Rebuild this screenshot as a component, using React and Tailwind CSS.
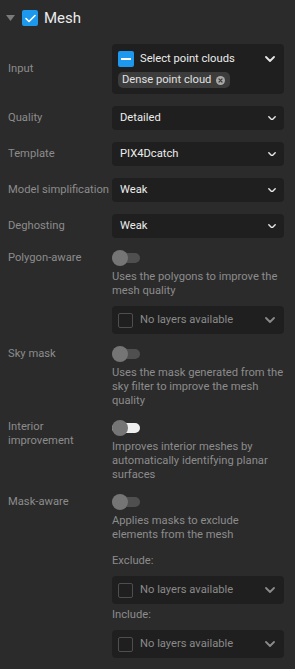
import React from 'react';

const font = { fontFamily: 'Roboto, "Noto Sans", sans-serif' };

function Chevron({ className = 'text-[#e6e6e6]', w = 8 }) {
  return (
    <svg width={w} height={w * 0.6} viewBox="0 0 10 6" className={className} fill="none">
      <path d="M1 1l4 4 4-4" stroke="currentColor" strokeWidth="1.8" strokeLinecap="round" strokeLinejoin="round" />
    </svg>
  );
}

function Select({ value }) {
  return (
    <div className="flex h-6 w-[172px] items-center justify-between rounded bg-[#1f1f1f] pl-2 pr-2">
      <span className="text-[11.2px] text-[#ececec]">{value}</span>
      <Chevron />
    </div>
  );
}

function LayerSelect() {
  return (
    <div className="flex h-7 w-[172px] items-center rounded bg-[#1f1f1f] pl-[6px] pr-[9px]">
      <span className="h-[15px] w-[15px] rounded-[2px] border-[1.5px] border-[#4e4e4e]" />
      <span className="ml-[7px] flex-1 text-[11.2px] text-[#8a8a8a]">No layers available</span>
      <Chevron className="text-[#8a8a8a]" w={10} />
    </div>
  );
}

function Toggle({ on }) {
  return (
    <div className="relative h-4 w-[28px]">
      <div className={`absolute left-0 right-0 top-[3px] h-[10px] rounded-full ${on ? 'bg-[#eeeeee]' : 'bg-[#4f4f4f]'}`} />
      <div className="absolute left-0 top-0 h-4 w-4 rounded-full bg-[#757575]" />
    </div>
  );
}

function Label({ children }) {
  return <div className="w-[104px] shrink-0 text-[11.2px] leading-[14px] text-[#8c8c8c]">{children}</div>;
}

function Desc({ children }) {
  return <p className="mt-1 text-[11.2px] leading-[14px] text-[#8c8c8c]">{children}</p>;
}

export default function App() {
  return (
    <div style={font} className="h-[669px] w-[295px] overflow-hidden bg-[#2b2b2b] pl-2 pr-[11px] pt-[10px]">
      {/* header */}
      <div className="flex h-4 items-center">
        <svg width="9" height="6" viewBox="0 0 9 6" className="ml-[-2px]">
          <path d="M0 0h9L4.5 6z" fill="#7a7a7a" />
        </svg>
        <div className="ml-[7px] flex h-4 w-4 items-center justify-center rounded-[2px] bg-[#1c98ee]">
          <svg width="11" height="9" viewBox="0 0 11 9" fill="none">
            <path d="M1 4.5l3 3L10 1.5" stroke="#fff" strokeWidth="1.6" strokeLinecap="round" strokeLinejoin="round" />
          </svg>
        </div>
        <span className="ml-[6px] text-[15px] text-[#ececec]">Mesh</span>
      </div>

      <div className="mt-[18px] flex flex-col gap-3">
        {/* Input */}
        <div className="flex items-center">
          <Label>Input</Label>
          <div className="w-[172px] rounded bg-[#1f1f1f] px-[6px] pb-[6px] pt-[7px]">
            <div className="flex h-4 items-center">
              <div className="flex h-4 w-4 items-center justify-center rounded-[2px] bg-[#1c98ee]">
                <div className="h-[2px] w-[10px] bg-white" />
              </div>
              <span className="ml-[6px] flex-1 text-[11.2px] text-[#ececec]">Select point clouds</span>
              <span className="mr-[3px]"><Chevron w={10} /></span>
            </div>
            <div className="mt-[5px] flex">
              <div className="flex h-4 items-center gap-[5px] rounded-[5px] bg-[#3c3c3c] pl-1 pr-[5px]">
                <span className="text-[11.2px] text-[#e0e0e0]">Dense point cloud</span>
                <span className="flex h-[9px] w-[9px] items-center justify-center rounded-full bg-[#a8a8a8]">
                  <svg width="5" height="5" viewBox="0 0 5 5">
                    <path d="M1 1l3 3M4 1L1 4" stroke="#3c3c3c" strokeWidth="1.2" strokeLinecap="round" />
                  </svg>
                </span>
              </div>
            </div>
          </div>
        </div>

        <div className="flex items-center">
          <Label>Quality</Label>
          <Select value="Detailed" />
        </div>
        <div className="flex items-center">
          <Label>Template</Label>
          <Select value="PIX4Dcatch" />
        </div>
        <div className="flex items-center">
          <Label>Model simplification</Label>
          <Select value="Weak" />
        </div>
        <div className="flex items-center">
          <Label>Deghosting</Label>
          <Select value="Weak" />
        </div>

        {/* Polygon-aware */}
        <div className="flex items-start">
          <div className="pt-[1px]"><Label>Polygon-aware</Label></div>
          <div className="w-[172px]">
            <Toggle />
            <Desc>Uses the polygons to improve the mesh quality</Desc>
            <div className="mt-2"><LayerSelect /></div>
          </div>
        </div>

        {/* Sky mask */}
        <div className="flex items-start">
          <div className="pt-[1px]"><Label>Sky mask</Label></div>
          <div className="w-[172px]">
            <Toggle />
            <Desc>Uses the mask generated from the sky filter to improve the mesh quality</Desc>
          </div>
        </div>

        {/* Interior improvement */}
        <div className="flex items-start">
          <div><Label>Interior<br />improvement</Label></div>
          <div className="w-[172px]">
            <Toggle on />
            <Desc>Improves interior meshes by automatically identifying planar surfaces</Desc>
          </div>
        </div>

        {/* Mask-aware */}
        <div className="flex items-start">
          <div className="pt-[1px]"><Label>Mask-aware</Label></div>
          <div className="w-[172px]">
            <Toggle />
            <Desc>Applies masks to exclude elements from the mesh</Desc>
            <p className="mt-3 text-[11.2px] leading-[14px] text-[#8c8c8c]">Exclude:</p>
            <div className="mt-2"><LayerSelect /></div>
            <p className="mt-1 text-[11.2px] leading-[14px] text-[#8c8c8c]">Include:</p>
            <div className="mt-2"><LayerSelect /></div>
          </div>
        </div>
      </div>
    </div>
  );
}
